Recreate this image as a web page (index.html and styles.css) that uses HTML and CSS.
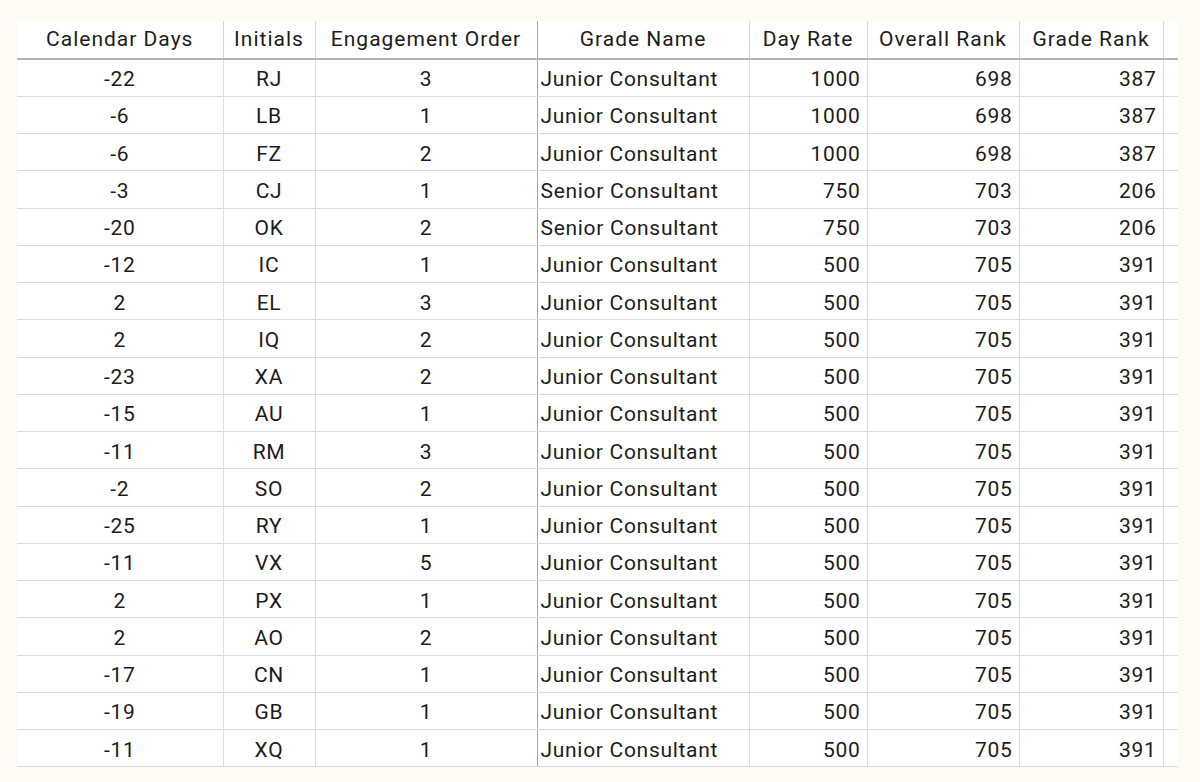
FILE: index.html
```html
<!DOCTYPE html>
<html lang="en">
<head>
<meta charset="utf-8">
<title>Consultants</title>
<link rel="stylesheet" href="styles.css">
</head>
<body>
<div class="page">
<table class="grid">
<colgroup>
<col class="c1"><col class="c2"><col class="c3"><col class="c4"><col class="c5"><col class="c6"><col class="c7"><col class="c8">
</colgroup>
<thead>
<tr><th>Calendar Days</th><th>Initials</th><th>Engagement Order</th><th class="grade">Grade Name</th><th>Day Rate</th><th>Overall Rank</th><th>Grade Rank</th><th class="pad"></th></tr>
</thead>
<tbody>
<tr><td class="ctr">-22</td><td class="ctr">RJ</td><td class="ctr">3</td><td class="grade">Junior Consultant</td><td class="num">1000</td><td class="num">698</td><td class="num">387</td><td class="pad"></td></tr>
<tr><td class="ctr">-6</td><td class="ctr">LB</td><td class="ctr">1</td><td class="grade">Junior Consultant</td><td class="num">1000</td><td class="num">698</td><td class="num">387</td><td class="pad"></td></tr>
<tr><td class="ctr">-6</td><td class="ctr">FZ</td><td class="ctr">2</td><td class="grade">Junior Consultant</td><td class="num">1000</td><td class="num">698</td><td class="num">387</td><td class="pad"></td></tr>
<tr><td class="ctr">-3</td><td class="ctr">CJ</td><td class="ctr">1</td><td class="grade">Senior Consultant</td><td class="num">750</td><td class="num">703</td><td class="num">206</td><td class="pad"></td></tr>
<tr><td class="ctr">-20</td><td class="ctr">OK</td><td class="ctr">2</td><td class="grade">Senior Consultant</td><td class="num">750</td><td class="num">703</td><td class="num">206</td><td class="pad"></td></tr>
<tr><td class="ctr">-12</td><td class="ctr">IC</td><td class="ctr">1</td><td class="grade">Junior Consultant</td><td class="num">500</td><td class="num">705</td><td class="num">391</td><td class="pad"></td></tr>
<tr><td class="ctr">2</td><td class="ctr">EL</td><td class="ctr">3</td><td class="grade">Junior Consultant</td><td class="num">500</td><td class="num">705</td><td class="num">391</td><td class="pad"></td></tr>
<tr><td class="ctr">2</td><td class="ctr">IQ</td><td class="ctr">2</td><td class="grade">Junior Consultant</td><td class="num">500</td><td class="num">705</td><td class="num">391</td><td class="pad"></td></tr>
<tr><td class="ctr">-23</td><td class="ctr">XA</td><td class="ctr">2</td><td class="grade">Junior Consultant</td><td class="num">500</td><td class="num">705</td><td class="num">391</td><td class="pad"></td></tr>
<tr><td class="ctr">-15</td><td class="ctr">AU</td><td class="ctr">1</td><td class="grade">Junior Consultant</td><td class="num">500</td><td class="num">705</td><td class="num">391</td><td class="pad"></td></tr>
<tr><td class="ctr">-11</td><td class="ctr">RM</td><td class="ctr">3</td><td class="grade">Junior Consultant</td><td class="num">500</td><td class="num">705</td><td class="num">391</td><td class="pad"></td></tr>
<tr><td class="ctr">-2</td><td class="ctr">SO</td><td class="ctr">2</td><td class="grade">Junior Consultant</td><td class="num">500</td><td class="num">705</td><td class="num">391</td><td class="pad"></td></tr>
<tr><td class="ctr">-25</td><td class="ctr">RY</td><td class="ctr">1</td><td class="grade">Junior Consultant</td><td class="num">500</td><td class="num">705</td><td class="num">391</td><td class="pad"></td></tr>
<tr><td class="ctr">-11</td><td class="ctr">VX</td><td class="ctr">5</td><td class="grade">Junior Consultant</td><td class="num">500</td><td class="num">705</td><td class="num">391</td><td class="pad"></td></tr>
<tr><td class="ctr">2</td><td class="ctr">PX</td><td class="ctr">1</td><td class="grade">Junior Consultant</td><td class="num">500</td><td class="num">705</td><td class="num">391</td><td class="pad"></td></tr>
<tr><td class="ctr">2</td><td class="ctr">AO</td><td class="ctr">2</td><td class="grade">Junior Consultant</td><td class="num">500</td><td class="num">705</td><td class="num">391</td><td class="pad"></td></tr>
<tr><td class="ctr">-17</td><td class="ctr">CN</td><td class="ctr">1</td><td class="grade">Junior Consultant</td><td class="num">500</td><td class="num">705</td><td class="num">391</td><td class="pad"></td></tr>
<tr><td class="ctr">-19</td><td class="ctr">GB</td><td class="ctr">1</td><td class="grade">Junior Consultant</td><td class="num">500</td><td class="num">705</td><td class="num">391</td><td class="pad"></td></tr>
<tr><td class="ctr">-11</td><td class="ctr">XQ</td><td class="ctr">1</td><td class="grade">Junior Consultant</td><td class="num">500</td><td class="num">705</td><td class="num">391</td><td class="pad"></td></tr>
</tbody>
</table>
</div>
</body>
</html>
```

FILE: styles.css
```css
html, body {
  margin: 0;
  padding: 0;
  background: #fcfbf6;
}

.page {
  padding: 21px 0 0 17px;
}

.grid {
  border-collapse: collapse;
  table-layout: fixed;
  width: 1161px;
  background: #ffffff;
  font-family: Roboto, "Noto Sans", sans-serif;
  font-size: 21px;
  letter-spacing: 0.7px;
  color: #1c1c1c;
}

.c1 { width: 206px; }
.c2 { width: 92px; }
.c3 { width: 222px; }
.c4 { width: 212px; }
.c5 { width: 118px; }
.c6 { width: 152px; }
.c7 { width: 144px; }
.c8 { width: 15px; }

.grid th {
  height: 38px;
  padding: 0 0 2px;
  font-weight: normal;
  letter-spacing: 1px;
  text-align: center;
  white-space: nowrap;
  border-left: 1px solid #d6d6d6;
  border-bottom: 2px solid #b4b4b4;
  box-sizing: border-box;
}

.grid th:first-child {
  border-left: none;
}

.grid td {
  height: 37.25px;
  padding: 4px 6px 0;
  white-space: nowrap;
  border-left: 1px solid #dcdcdc;
  border-bottom: 1px solid #dcdcdc;
  box-sizing: border-box;
  line-height: 1;
}

.grid td:first-child {
  border-left: none;
}

.grid tbody tr:first-child td {
  border-top: 1px solid #e4e4e4;
}

.grid .grade {
  border-left: 1px solid #a8a8a8;
}

.grid td.grade {
  text-align: left;
  padding-left: 3px;
}

.ctr { text-align: center; }
.num { text-align: right; }

.grid .pad {
  padding: 0;
}
```
